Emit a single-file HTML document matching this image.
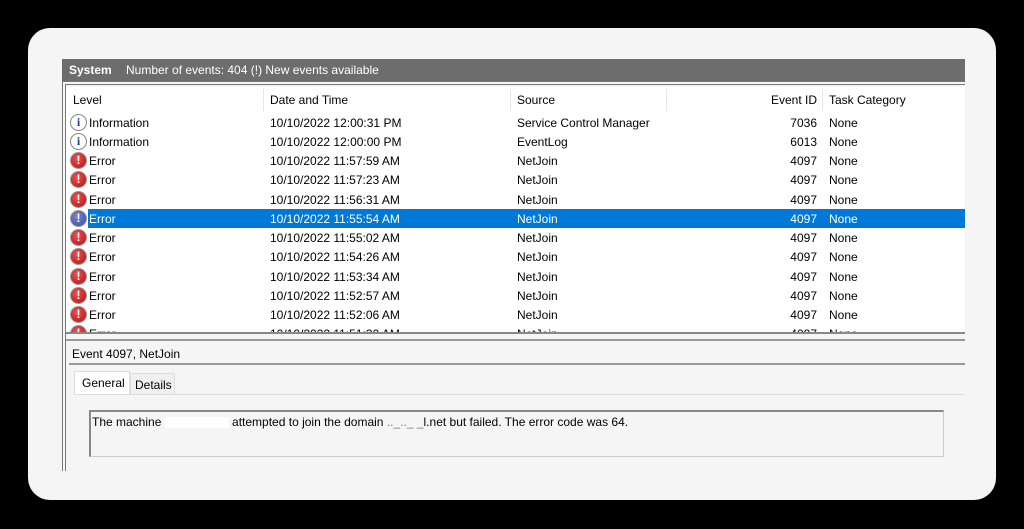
<!DOCTYPE html>
<html><head><style>
*{margin:0;padding:0;box-sizing:border-box}
body{width:1024px;height:529px;background:#000;position:relative;overflow:hidden;font-family:"Liberation Sans",sans-serif;font-size:12px;color:#000}
.card{position:absolute;left:28px;top:28px;width:968px;height:472px;background:#f5f5f5;border-radius:22px}
.hdr{position:absolute;left:62px;top:59px;width:903px;height:22px;background:#6d6d6d;color:#fff;line-height:22px}
.win{position:absolute;left:62px;top:81px;width:903px;height:390px;border-left:4px double #777;border-top:4px double #777;background:#f5f5f5}
.list{position:absolute;left:66px;top:87px;width:899px;height:245px;background:#fff;overflow:hidden}
.t{position:absolute;white-space:nowrap}
.sep{position:absolute;top:2px;height:22px;width:1px;background:#e5e5e5}
.row{position:absolute;left:0;width:899px;height:19px}
.sel{background:#0078d7;color:#fff}
.ic{position:absolute;left:4px;top:1px;width:17px;height:17px;border-radius:50%}
.info{background:#fff;border:1.5px solid #888;color:#1a3fa8;font:bold 12px "Liberation Serif",serif;text-align:center;line-height:14px}
.err{background:radial-gradient(circle at 40% 35%,#f05050,#b01010);border:1.5px solid #999;color:#fff;font:bold 12px "Liberation Sans";text-align:center;line-height:14px}
.selic{background:radial-gradient(circle at 40% 35%,#7a84d0,#3a4aa0)}
</style></head><body>
<div class="card"></div>
<div class="hdr"><b style="position:absolute;left:7px">System</b><span style="position:absolute;left:64px">Number of events: 404 (!) New events available</span></div>
<div class="win"></div>
<div class="list">
<div class="t" style="left:7px;top:6px">Level</div>
<div class="sep" style="left:197px"></div>
<div class="t" style="left:204px;top:6px">Date and Time</div>
<div class="sep" style="left:444px"></div>
<div class="t" style="left:451px;top:6px">Source</div>
<div class="sep" style="left:600px"></div>
<div class="t" style="left:700px;top:6px;width:51px;text-align:right">Event ID</div>
<div class="sep" style="left:756px"></div>
<div class="t" style="left:763px;top:6px">Task Category</div>
</div>
<div style="position:absolute;left:66px;top:113px;width:899px;height:219px;overflow:hidden">
<div id="rows"></div>
</div>
<script>
var d=[["i","Information","10/10/2022 12:00:31 PM","Service Control Manager","7036"],["i","Information","10/10/2022 12:00:00 PM","EventLog","6013"],
["e","Error","10/10/2022 11:57:59 AM","NetJoin","4097"],["e","Error","10/10/2022 11:57:23 AM","NetJoin","4097"],["e","Error","10/10/2022 11:56:31 AM","NetJoin","4097"],
["s","Error","10/10/2022 11:55:54 AM","NetJoin","4097"],["e","Error","10/10/2022 11:55:02 AM","NetJoin","4097"],["e","Error","10/10/2022 11:54:26 AM","NetJoin","4097"],
["e","Error","10/10/2022 11:53:34 AM","NetJoin","4097"],["e","Error","10/10/2022 11:52:57 AM","NetJoin","4097"],["e","Error","10/10/2022 11:52:06 AM","NetJoin","4097"],["e","Error","10/10/2022 11:51:30 AM","NetJoin","4097"]];
var tops=[0,19,38,57,77,96,115,134,154,173,192,211],h="";
d.forEach(function(r,i){
var cls=r[0]=="i"?"info":(r[0]=="s"?"err selic":"err");
h+='<div class="row'+(r[0]=="s"?' sel':'')+'" style="top:'+tops[i]+'px">'+(r[0]=="s"?'<div style="position:absolute;left:0;top:0;width:22px;height:19px;background:#fff"></div>':'')+'<div class="ic '+cls+'">'+(r[0]=="i"?'i':'!')+'</div><div class="t" style="left:23px;top:3px">'+r[1]+'</div><div class="t" style="left:204px;top:3px">'+r[2]+'</div><div class="t" style="left:451px;top:3px">'+r[3]+'</div><div class="t" style="left:700px;top:3px;width:51px;text-align:right">'+r[4]+'</div><div class="t" style="left:763px;top:3px">None</div></div>';});
document.getElementById('rows').innerHTML=h;
</script>
<div style="position:absolute;left:66px;top:332px;width:899px;height:9px;background:#f5f5f5;border-top:2px solid #888;border-bottom:2px solid #999"></div>
<div class="t" style="left:72px;top:347px">Event 4097, NetJoin</div>
<div style="position:absolute;left:69px;top:363px;width:896px;height:2px;background:#999"></div>
<div style="position:absolute;left:74px;top:371px;width:56px;height:24px;background:#fff;border:1px solid #ddd;border-bottom:none"></div>
<div class="t" style="left:82px;top:376px">General</div>
<div style="position:absolute;left:130px;top:373px;width:45px;height:21px;border:1px solid #ddd;border-bottom:none;background:#f0f0f0"></div>
<div class="t" style="left:135px;top:378px">Details</div>
<div style="position:absolute;left:74px;top:394px;width:891px;height:1px;background:#ddd"></div>
<div style="position:absolute;left:89px;top:410px;width:855px;height:47px;border:1px solid #ccc;border-top:2px solid #888;border-left:2px solid #888;background:#f5f5f5"></div>
<div class="t" style="left:92px;top:415px">The machine <span style="display:inline-block;width:64px;height:11px;background:#fff;vertical-align:middle"></span> attempted to join the domain <span style="color:#777">.._.._ _</span>l.net but failed. The error code was 64.</div>
<div style="position:absolute;left:66px;top:470px;width:899px;height:30px;background:#f5f5f5"></div>
</body></html>
